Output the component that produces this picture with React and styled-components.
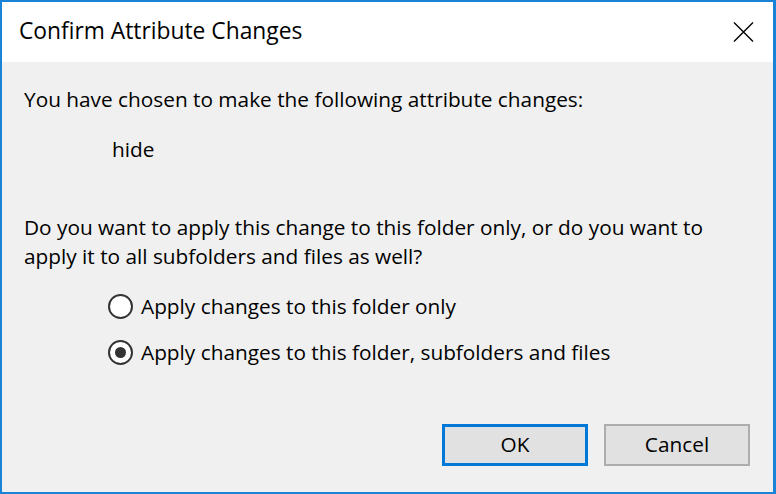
import React, { useState } from "react";
import styled, { createGlobalStyle } from "styled-components";

const Global = createGlobalStyle`
  html, body { margin: 0; padding: 0; background: #ffffff; }
  * { box-sizing: border-box; }
`;

const Window = styled.div`
  width: 776px;
  height: 494px;
  border: 2px solid #1883d7;
  border-right-width: 3px;
  display: flex;
  flex-direction: column;
  font-family: "Open Sans", "Noto Sans", sans-serif;
  font-size: 20.8px;
  color: #000;
  background: #f0f0f0;
`;

const TitleBar = styled.div`
  height: 60px;
  flex: none;
  background: #ffffff;
  display: flex;
  align-items: center;
  justify-content: space-between;
  padding: 0 18px 0 17px;
`;

const Title = styled.div`
  font-size: 22.8px;
  line-height: 26px;
  padding-bottom: 2px;
`;

const CloseButton = styled.button`
  width: 24px;
  height: 24px;
  padding: 0;
  border: none;
  background: transparent;
  display: flex;
  align-items: center;
  justify-content: center;
`;

const Content = styled.div`
  flex: 1;
  display: flex;
  flex-direction: column;
  padding: 23px 22px 0 22px;
`;

const Paragraph = styled.p`
  margin: 0;
  line-height: 29px;
`;

const Change = styled.div`
  margin: 21px 0 0 88px;
  line-height: 29px;
`;

const Question = styled(Paragraph)`
  margin-top: 49px;
`;

const Options = styled.div`
  margin: 22px 0 0 84px;
  display: flex;
  flex-direction: column;
  gap: 20px;
`;

const OptionLabel = styled.label`
  display: flex;
  align-items: center;
  gap: 8px;
  line-height: 26px;
  cursor: default;
`;

const RadioCircle = styled.span`
  width: 25px;
  height: 25px;
  border-radius: 50%;
  border: 2px solid #333333;
  background: #ffffff;
  display: flex;
  align-items: center;
  justify-content: center;
  flex: none;
  &::after {
    content: "";
    width: 11px;
    height: 11px;
    border-radius: 50%;
    background: ${(p) => (p.$checked ? "#333333" : "transparent")};
  }
`;

const Footer = styled.div`
  margin-top: auto;
  display: flex;
  justify-content: flex-end;
  gap: 16px;
  padding: 0 1px 26px 0;
`;

const Button = styled.button`
  width: 146px;
  height: 42px;
  background: #e1e1e1;
  border: ${(p) => (p.$primary ? "3px solid #0078d7" : "2px solid #adadad")};
  font-family: inherit;
  font-size: 20.8px;
  color: #000;
  padding: 0 0 2px;
`;

const options = [
  "Apply changes to this folder only",
  "Apply changes to this folder, subfolders and files",
];

export default function App() {
  const [selected, setSelected] = useState(1);
  return (
    <>
      <Global />
      <Window>
        <TitleBar>
          <Title>Confirm Attribute Changes</Title>
          <CloseButton aria-label="Close">
            <svg width="21" height="20" viewBox="0 0 21 20">
              <path d="M1 0.5 L20 19.5 M20 0.5 L1 19.5" stroke="#000" strokeWidth="1.4" fill="none" />
            </svg>
          </CloseButton>
        </TitleBar>
        <Content>
          <Paragraph>You have chosen to make the following attribute changes:</Paragraph>
          <Change>hide</Change>
          <Question>
            Do you want to apply this change to this folder only, or do you want to
            <br />
            apply it to all subfolders and files as well?
          </Question>
          <Options>
            {options.map((o, i) => (
              <OptionLabel key={o} onClick={() => setSelected(i)}>
                <RadioCircle $checked={selected === i} />
                {o}
              </OptionLabel>
            ))}
          </Options>
          <Footer>
            <Button $primary>OK</Button>
            <Button>Cancel</Button>
          </Footer>
        </Content>
      </Window>
    </>
  );
}
